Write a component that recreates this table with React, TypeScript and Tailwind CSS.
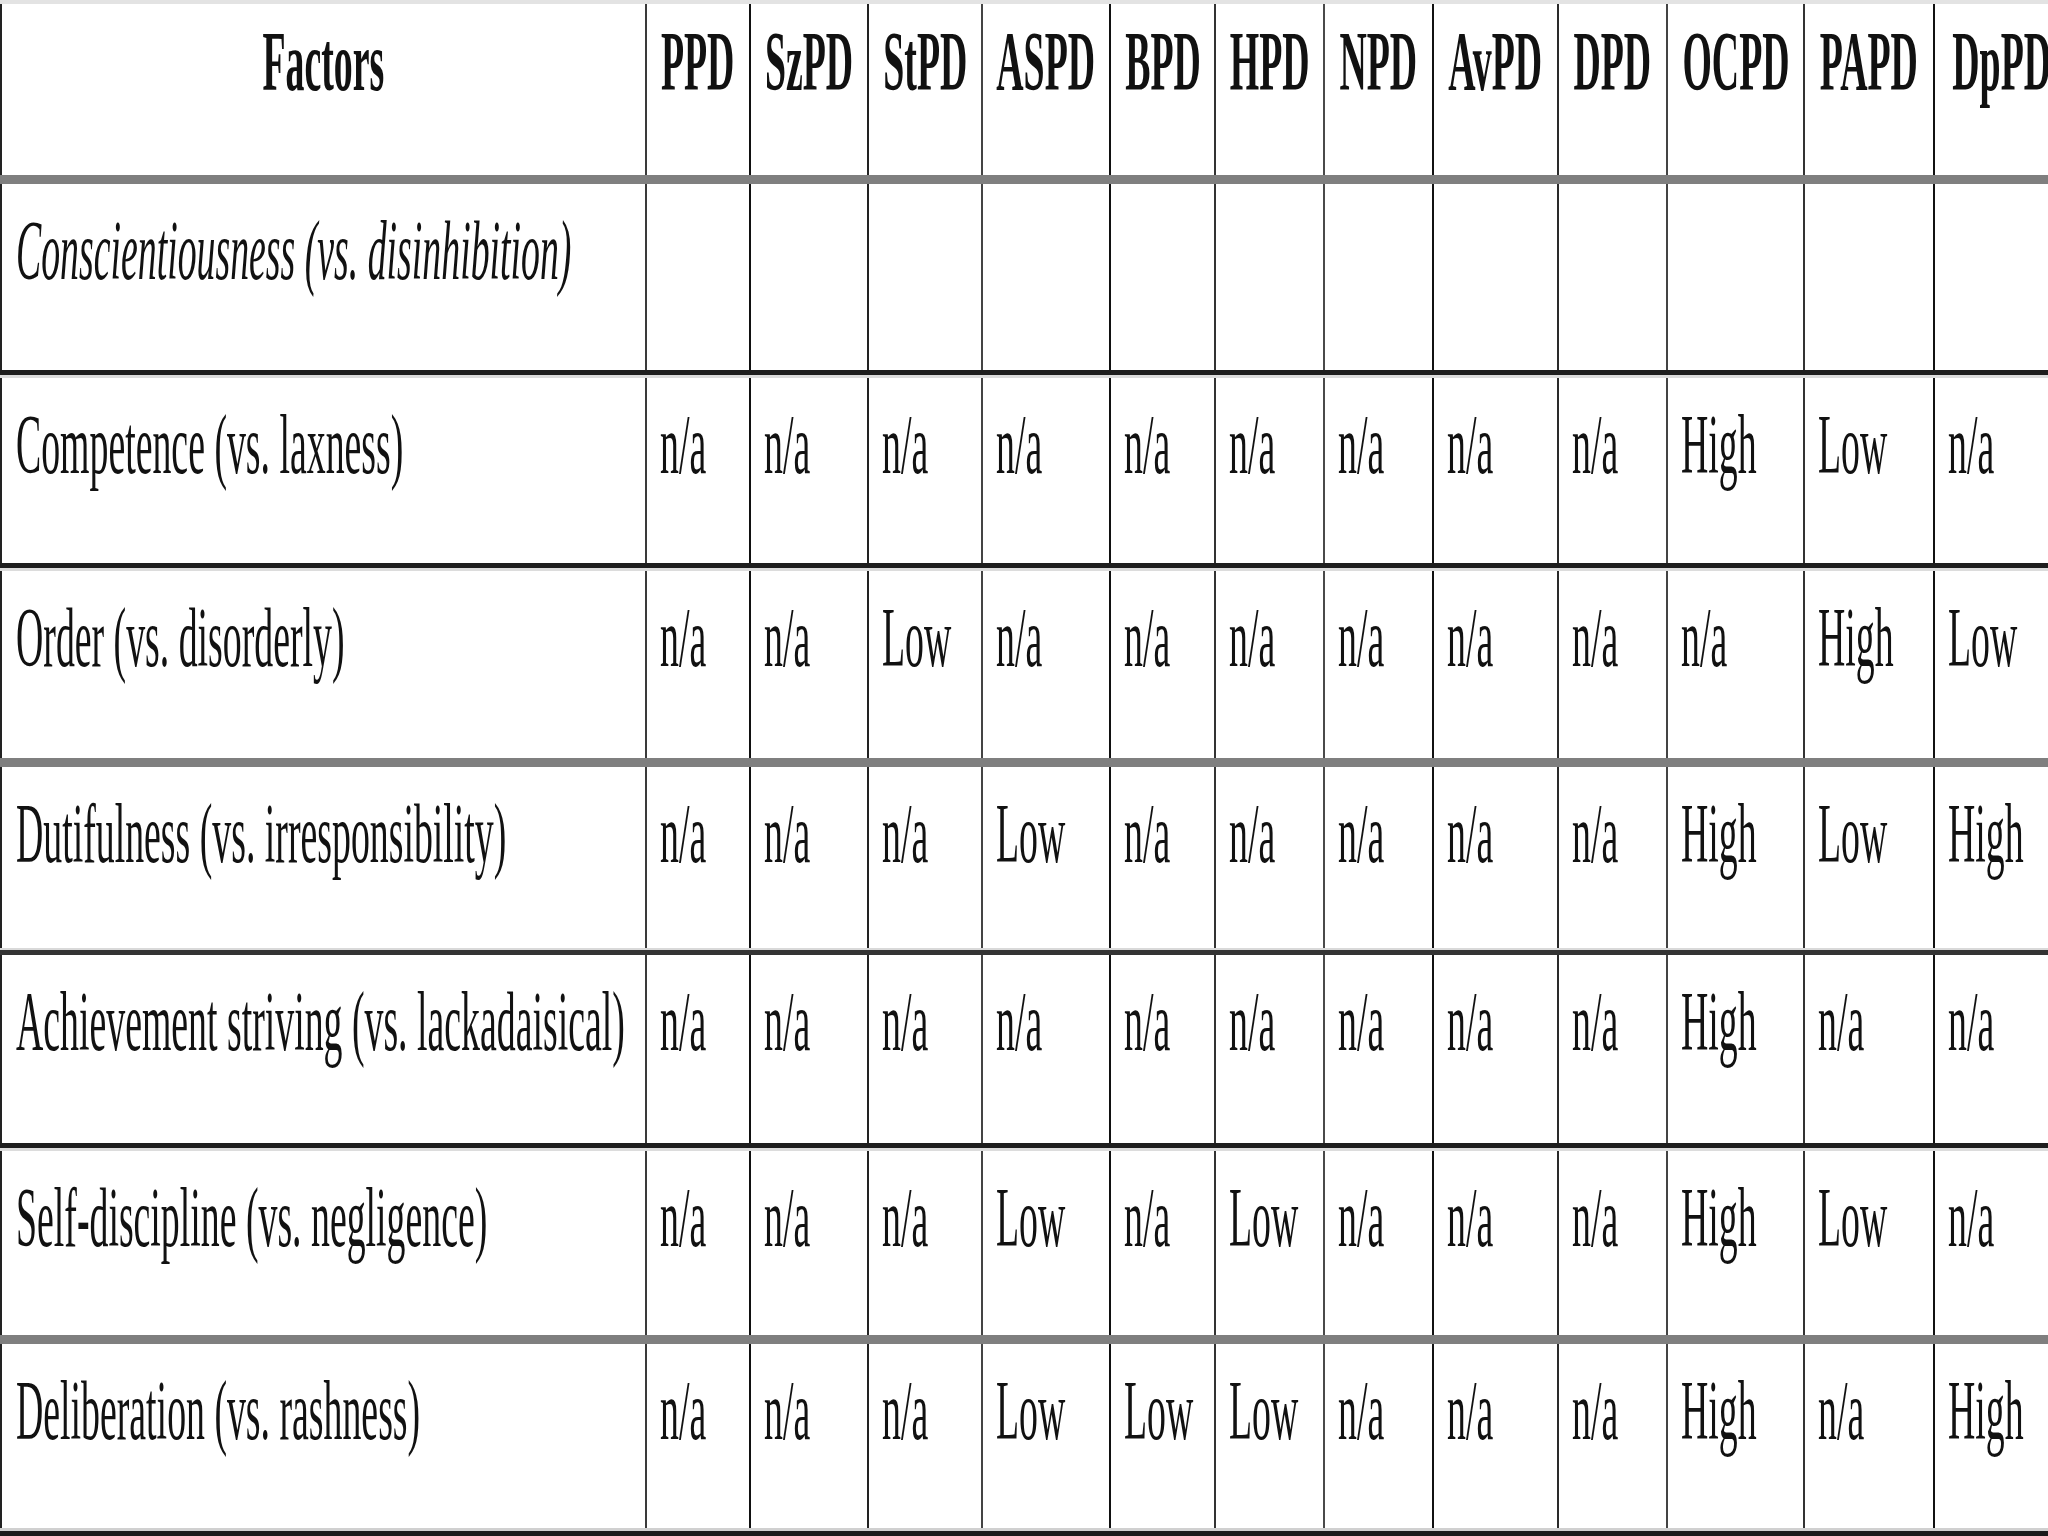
const kolonlar = ["PPD", "SzPD", "StPD", "ASPD", "BPD", "HPD", "NPD", "AvPD", "DPD", "OCPD", "PAPD", "DpPD"];

const satirlar = [
  { ad: "Competence (vs. laxness)", d: ["n/a", "n/a", "n/a", "n/a", "n/a", "n/a", "n/a", "n/a", "n/a", "High", "Low", "n/a"] },
  { ad: "Order (vs. disorderly)", d: ["n/a", "n/a", "Low", "n/a", "n/a", "n/a", "n/a", "n/a", "n/a", "n/a", "High", "Low"] },
  { ad: "Dutifulness (vs. irresponsibility)", d: ["n/a", "n/a", "n/a", "Low", "n/a", "n/a", "n/a", "n/a", "n/a", "High", "Low", "High"] },
  { ad: "Achievement striving (vs. lackadaisical)", d: ["n/a", "n/a", "n/a", "n/a", "n/a", "n/a", "n/a", "n/a", "n/a", "High", "n/a", "n/a"] },
  { ad: "Self-discipline (vs. negligence)", d: ["n/a", "n/a", "n/a", "Low", "n/a", "Low", "n/a", "n/a", "n/a", "High", "Low", "n/a"] },
  { ad: "Deliberation (vs. rashness)", d: ["n/a", "n/a", "n/a", "Low", "Low", "Low", "n/a", "n/a", "n/a", "High", "n/a", "High"] },
];

// row heights, measured off the picture
const yukseklik = ["h-[186px]", "h-[185px]", "h-[187px]", "h-[181px]", "h-[188px]", "h-[184px]", "h-[184px]"];

// border colour of each column's left line
const cizgi = [
  "border-[#222]", "border-[#3a3a3a]", "border-[#111]", "border-[#222]", "border-[#444]", "border-[#111]",
  "border-[#333]", "border-[#4a4a4a]", "border-[#111]", "border-[#2a2a2a]", "border-[#444]", "border-[#333]", "border-[#111]",
];

const izgara =
  "grid grid-cols-[645px_104px_118px_114px_128px_105px_109px_109px_125px_109px_137px_130px_135px]";

function Yazi({ children, merkez, className = "" }: { children: React.ReactNode; merkez?: boolean; className?: string }) {
  return (
    <span
      className={`inline-block whitespace-nowrap text-[84px] leading-none text-[#111] scale-x-[0.45] ${
        merkez ? "origin-center" : "origin-left"
      } ${className}`}
    >
      {children}
    </span>
  );
}

function Ayirac({ tip }: { tip: "gri" | "siyah" | "koyu" | "alt" }) {
  if (tip === "gri") return <div className="h-[9px] bg-[#7f7f7f]" />;
  if (tip === "koyu")
    return (
      <div className="flex flex-col">
        <div className="h-[2px] bg-[#d9d9d9]" />
        <div className="h-[5px] bg-[#333]" />
      </div>
    );
  if (tip === "alt")
    return (
      <div className="flex flex-col">
        <div className="h-[3px] bg-[#d0d0d0]" />
        <div className="h-[6px] bg-[#1a1a1a]" />
      </div>
    );
  return (
    <div className="flex flex-col">
      <div className="h-[5px] bg-[#1e1e1e]" />
      <div className="h-[3px] bg-[#dcdcdc]" />
    </div>
  );
}

const ayiraclar: ("gri" | "siyah" | "koyu" | "alt")[] = ["siyah", "siyah", "gri", "koyu", "siyah", "gri", "alt"];

export default function App() {
  return (
    <div className="h-[1536px] w-[2048px] overflow-hidden bg-white font-['Liberation_Serif','Times_New_Roman',serif]">
      <div className="w-[2068px]">
        <div className="h-[4px] bg-[#e3e3e3]" />

        {/* Header */}
        <div className={`${izgara} h-[171px]`}>
          <div className={`flex justify-center border-l-2 pt-[16px] ${cizgi[0]}`}>
            <Yazi merkez className="font-bold">Factors</Yazi>
          </div>
          {kolonlar.map((k, i) => (
            <div key={k} className={`flex justify-center border-l-2 pt-[16px] ${cizgi[i + 1]}`}>
              <Yazi merkez className="font-bold">{k}</Yazi>
            </div>
          ))}
        </div>
        <Ayirac tip="gri" />

        {/* Section row */}
        <div className={`${izgara} ${yukseklik[0]}`}>
          <div className={`border-l-2 pt-[25px] pl-[14px] ${cizgi[0]}`}>
            <Yazi className="italic">Conscientiousness (vs. disinhibition)</Yazi>
          </div>
          {kolonlar.map((k, i) => (
            <div key={k} className={`border-l-2 ${cizgi[i + 1]}`} />
          ))}
        </div>
        <Ayirac tip={ayiraclar[0]} />

        {satirlar.map((s, r) => (
          <div key={s.ad}>
            <div className={`${izgara} ${yukseklik[r + 1]}`}>
              <div className={`border-l-2 pt-[25px] pl-[14px] ${cizgi[0]}`}>
                <Yazi>{s.ad}</Yazi>
              </div>
              {s.d.map((v, i) => (
                <div key={i} className={`border-l-2 pt-[25px] pl-[13px] ${cizgi[i + 1]}`}>
                  <Yazi>{v}</Yazi>
                </div>
              ))}
            </div>
            <Ayirac tip={ayiraclar[r + 1]} />
          </div>
        ))}
      </div>
    </div>
  );
}
